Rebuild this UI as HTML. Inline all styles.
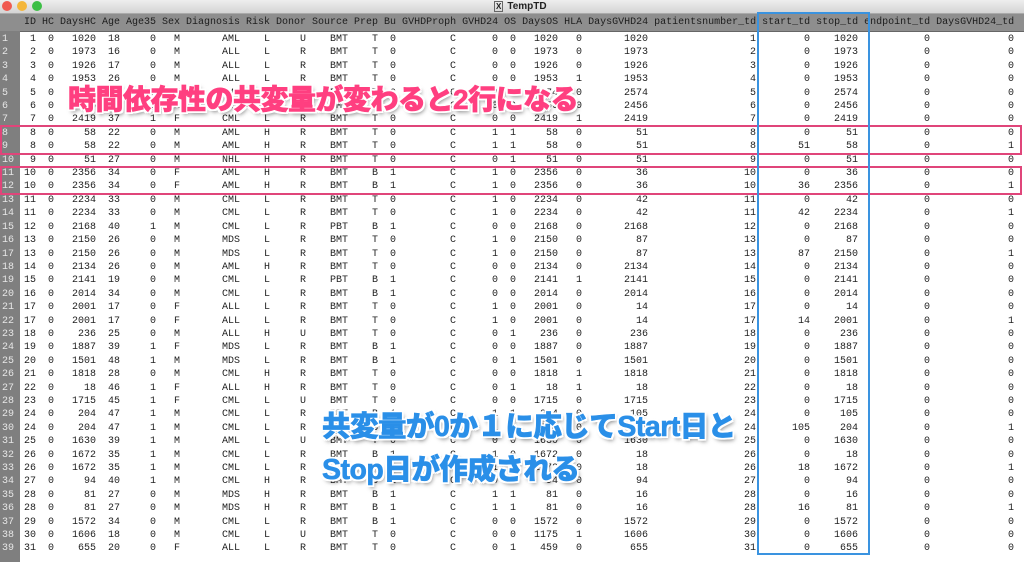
<!DOCTYPE html>
<html><head><meta charset="utf-8"><style>
html,body{margin:0;padding:0;width:1024px;height:562px;overflow:hidden;background:#fff;position:relative;font-family:"Liberation Mono",monospace;font-size:10px;color:#222}
.tb{position:absolute;left:0;top:0;width:1024px;height:13px;background:linear-gradient(#eeeeee,#d4d4d4);border-bottom:1px solid #aaa}
.tt{position:absolute;left:494px;top:0;font:bold 10px "Liberation Sans",sans-serif;line-height:13px;color:#222}
.dot{position:absolute;top:1px;width:10px;height:10px;border-radius:50%}
.hd{position:absolute;left:0;top:14px;width:1024px;height:17px;background:#8e8e8e;border-bottom:1px solid #666}
.hdt{position:absolute;left:24px;top:14px;line-height:17px;white-space:pre;color:#1d1d1d}
.rn{position:absolute;left:0;top:31px;width:20px;height:531px;background:#7f7f7f}
.c{position:absolute;top:33px;width:44px;text-align:right;white-space:pre;margin:0;font:inherit;line-height:13.4px}
.rnt{position:absolute;left:2px;top:33px;white-space:pre;color:#e6e6e6;margin:0;font:inherit;line-height:13.4px}
.pk{position:absolute;border:2px solid #e0457a;box-sizing:border-box}
.ov{position:absolute;font-family:"Liberation Sans","Noto Sans CJK JP",sans-serif;font-weight:900;white-space:nowrap;letter-spacing:-0.5px}
.p{color:#ff3f80;font-size:28px;-webkit-text-stroke:0.6px #ff3f80;text-shadow:2px 0 0 #fff,-2px 0 0 #fff,0 2px 0 #fff,0 -2px 0 #fff,2px 2px 0 #fff,-2px -2px 0 #fff,2px -2px 0 #fff,-2px 2px 0 #fff,2px 3px 4px rgba(0,0,0,.5)}
.b{color:#2a8fe8;font-size:28.5px;-webkit-text-stroke:0.6px #2a8fe8;text-shadow:2px 0 0 #fff,-2px 0 0 #fff,0 2px 0 #fff,0 -2px 0 #fff,2px 2px 0 #fff,-2px -2px 0 #fff,2px -2px 0 #fff,-2px 2px 0 #fff,2px 3px 4px rgba(0,0,0,.5)}
</style></head><body>
<div class="tb"></div>
<div class="dot" style="left:2px;background:#f05a50"></div>
<div class="dot" style="left:17px;background:#f4b63a"></div>
<div class="dot" style="left:32px;background:#3cbf45"></div>
<div class="tt"><span style="display:inline-block;border:1px solid #666;font-size:8px;line-height:9px;padding:0 1px;margin-right:4px">X</span>TempTD</div>
<div class="hd"></div>
<div class="hdt">ID HC DaysHC Age Age35 Sex Diagnosis Risk Donor Source Prep Bu GVHDProph GVHD24 OS DaysOS HLA DaysGVHD24 patientsnumber_td start_td stop_td endpoint_td DaysGVHD24_td</div>
<div class="rn"></div>
<pre class="rnt">1
2
3
4
5
6
7
8
9
10
11
12
13
14
15
16
17
18
19
20
21
22
23
24
25
26
27
28
29
30
31
32
33
34
35
36
37
38
39</pre>
<pre class="c" style="left:-8px">1
2
3
4
5
6
7
8
8
9
10
10
11
11
12
13
13
14
15
16
17
17
18
19
20
21
22
23
24
24
25
26
26
27
28
28
29
30
31</pre>
<pre class="c" style="left:10px">0
0
0
0
0
0
0
0
0
0
0
0
0
0
0
0
0
0
0
0
0
0
0
0
0
0
0
0
0
0
0
0
0
0
0
0
0
0
0</pre>
<pre class="c" style="left:52px">1020
1973
1926
1953
2574
2456
2419
58
58
51
2356
2356
2234
2234
2168
2150
2150
2134
2141
2014
2001
2001
236
1887
1501
1818
18
1715
204
204
1630
1672
1672
94
81
81
1572
1606
655</pre>
<pre class="c" style="left:76px">18
16
17
26
20
15
37
22
22
27
34
34
33
33
40
26
26
26
19
34
17
17
25
39
48
28
46
45
47
47
39
35
35
40
27
27
34
18
20</pre>
<pre class="c" style="left:112px">0
0
0
0
0
0
1
0
0
0
0
0
0
0
1
0
0
0
0
0
0
0
0
1
1
0
1
1
1
1
1
1
1
1
0
0
0
0
0</pre>
<pre class="c" style="left:136px">M
M
M
M
M
M
F
M
M
M
F
F
M
M
M
M
M
M
M
M
F
F
M
F
M
M
F
F
M
M
M
M
M
M
M
M
M
M
F</pre>
<pre class="c" style="left:196px">AML
ALL
ALL
ALL
AML
ALL
CML
AML
AML
NHL
AML
AML
CML
CML
CML
MDS
MDS
AML
CML
CML
ALL
ALL
ALL
MDS
MDS
CML
ALL
CML
CML
CML
AML
CML
CML
CML
MDS
MDS
CML
CML
ALL</pre>
<pre class="c" style="left:226px">L
L
L
L
L
L
L
H
H
H
H
H
L
L
L
L
L
H
L
L
L
L
H
L
L
H
H
L
L
L
L
L
L
H
H
H
L
L
L</pre>
<pre class="c" style="left:262px">U
R
R
R
R
R
R
R
R
R
R
R
R
R
R
R
R
R
R
R
R
R
U
R
R
R
R
U
R
R
U
R
R
R
R
R
R
U
R</pre>
<pre class="c" style="left:304px">BMT
BMT
BMT
BMT
BMT
BMT
BMT
BMT
BMT
BMT
BMT
BMT
BMT
BMT
PBT
BMT
BMT
BMT
PBT
BMT
BMT
BMT
BMT
BMT
BMT
BMT
BMT
BMT
PBT
PBT
BMT
BMT
BMT
BMT
BMT
BMT
BMT
BMT
BMT</pre>
<pre class="c" style="left:334px">T
T
T
T
T
T
T
T
T
T
B
B
T
T
B
T
T
T
B
B
T
T
T
B
B
T
T
T
B
B
T
B
B
B
B
B
B
T
T</pre>
<pre class="c" style="left:352px">0
0
0
0
0
0
0
0
0
0
1
1
0
0
1
0
0
0
1
1
0
0
0
1
1
0
0
0
1
1
0
1
1
1
1
1
1
0
0</pre>
<pre class="c" style="left:412px">C
C
C
C
C
C
C
C
C
C
C
C
C
C
C
C
C
C
C
C
C
C
C
C
C
C
C
C
C
C
C
C
C
C
C
C
C
C
C</pre>
<pre class="c" style="left:454px">0
0
0
0
0
0
0
1
1
0
1
1
1
1
0
1
1
0
0
0
1
1
0
0
0
0
0
0
1
1
0
1
1
0
1
1
0
0
0</pre>
<pre class="c" style="left:472px">0
0
0
0
0
0
0
1
1
1
0
0
0
0
0
0
0
0
0
0
0
0
1
0
1
0
1
0
1
1
0
0
0
1
1
1
0
0
1</pre>
<pre class="c" style="left:514px">1020
1973
1926
1953
2574
2456
2419
58
58
51
2356
2356
2234
2234
2168
2150
2150
2134
2141
2014
2001
2001
236
1887
1501
1818
18
1715
204
204
1630
1672
1672
94
81
81
1572
1175
459</pre>
<pre class="c" style="left:538px">0
0
0
1
0
0
1
0
0
0
0
0
0
0
0
0
0
0
1
0
0
0
0
0
0
1
1
0
0
0
0
0
0
0
0
0
0
1
0</pre>
<pre class="c" style="left:604px">1020
1973
1926
1953
2574
2456
2419
51
51
51
36
36
42
42
2168
87
87
2134
2141
2014
14
14
236
1887
1501
1818
18
1715
105
105
1630
18
18
94
16
16
1572
1606
655</pre>
<pre class="c" style="left:712px">1
2
3
4
5
6
7
8
8
9
10
10
11
11
12
13
13
14
15
16
17
17
18
19
20
21
22
23
24
24
25
26
26
27
28
28
29
30
31</pre>
<pre class="c" style="left:766px">0
0
0
0
0
0
0
0
51
0
0
36
0
42
0
0
87
0
0
0
0
14
0
0
0
0
0
0
0
105
0
0
18
0
0
16
0
0
0</pre>
<pre class="c" style="left:814px">1020
1973
1926
1953
2574
2456
2419
51
58
51
36
2356
42
2234
2168
87
2150
2134
2141
2014
14
2001
236
1887
1501
1818
18
1715
105
204
1630
18
1672
94
16
81
1572
1606
655</pre>
<pre class="c" style="left:886px">0
0
0
0
0
0
0
0
0
0
0
0
0
0
0
0
0
0
0
0
0
0
0
0
0
0
0
0
0
0
0
0
0
0
0
0
0
0
0</pre>
<pre class="c" style="left:970px">0
0
0
0
0
0
0
0
1
0
0
1
0
1
0
0
1
0
0
0
0
1
0
0
0
0
0
0
0
1
0
0
1
0
0
1
0
0
0</pre>
<div class="pk" style="left:0;top:125px;width:1022px;height:30px"></div>
<div class="pk" style="left:0;top:166px;width:1022px;height:29px"></div>
<div style="position:absolute;left:757px;top:12px;width:113px;height:543px;border:2px solid #3a93e0;box-sizing:border-box"></div>
<div class="ov p" style="left:68px;top:78px">時間依存性の共変量が変わると2行になる</div>
<div class="ov b" style="left:322px;top:404px">共変量が0か１に応じてStart日と</div>
<div class="ov b" style="left:322px;top:447px">Stop日が作成される</div>
</body></html>
